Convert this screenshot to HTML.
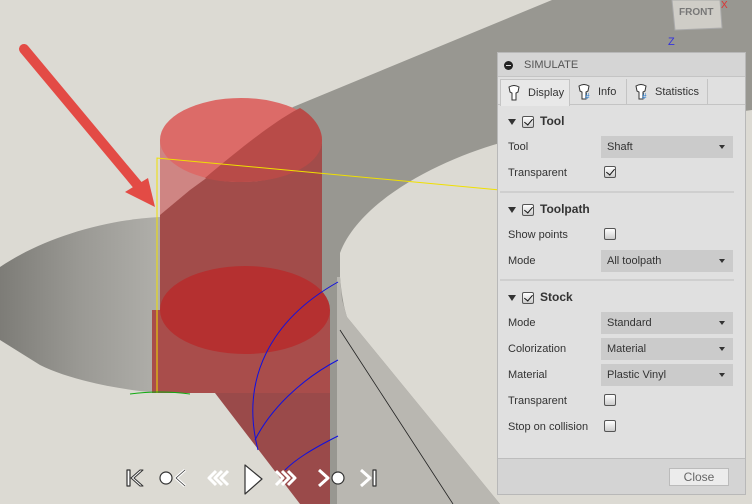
<!DOCTYPE html>
<html><head><meta charset="utf-8"><style>
*{margin:0;padding:0;box-sizing:border-box}
body{width:752px;height:504px;overflow:hidden;background:#dcdad3;font-family:"Liberation Sans",Arial,sans-serif;font-size:11px;color:#333;position:relative}
svg.scene{position:absolute;left:0;top:0}
.panel{position:absolute;left:497px;top:52px;width:249px;height:443px;background:#e0e0e0;border:1px solid #b8b8b8}
.hdr{height:24px;background:#d5d5d5;border-bottom:1px solid #c4c4c4;position:relative}
.hdr span{position:absolute;left:26px;top:6px;color:#555;font-size:11px}
.hdr i{position:absolute;left:6px;top:8px;width:9px;height:9px;border-radius:50%;background:#222}
.hdr i:after{content:"";position:absolute;left:2px;top:4px;width:5px;height:1px;background:#ddd}
.tabs{position:absolute;top:26px;left:0;right:0;height:26px;border-bottom:1px solid #c4c4c4}
.tab{position:absolute;top:0;height:26px;padding-left:27px;line-height:26px;color:#333}
.tab.act{background:#e8e8e8;border:1px solid #c4c4c4;border-bottom:none;height:27px}
.ico{position:absolute;left:7px;top:5px;width:12px;height:16px}
.row{position:absolute;left:10px;color:#333}
.sec{position:absolute;left:10px;font-weight:bold;font-size:12px;color:#333}
.tri{display:inline-block;width:0;height:0;border-left:4px solid transparent;border-right:4px solid transparent;border-top:6px solid #333;vertical-align:middle;margin-right:6px}
.cb{position:absolute;width:12px;height:12px;border:1px solid #555;border-radius:2px;background:linear-gradient(#fff,#ccc)}
.cb.on:after{content:"";position:absolute;left:3px;top:0px;width:4px;height:7px;border-right:1.5px solid #111;border-bottom:1.5px solid #111;transform:rotate(40deg)}
.dd{position:absolute;left:103px;width:132px;height:22px;background:#cbcbcb;line-height:22px;padding-left:6px;color:#333}
.dd:after{content:"";position:absolute;right:8px;top:9px;border-left:3px solid transparent;border-right:3px solid transparent;border-top:4px solid #333}
.sep{position:absolute;left:2px;width:234px;height:2px;background:#cfcfcf}
.foot{position:absolute;left:0;right:0;bottom:0;height:36px;background:#d4d4d4;border-top:1px solid #bdbdbd}
.close{position:absolute;left:171px;top:9px;width:60px;height:18px;border:1px solid #bbb;background:#ececec;text-align:center;line-height:16px;color:#666;font-size:12px}
</style></head><body>
<svg class="scene" width="752" height="504" viewBox="0 0 752 504">
<!-- gray band -->
<polygon points="160,215 293,107 552,0 752,0 752,504 330,504 330,330 160,330" fill="#989791"/>
<!-- light right face -->
<path d="M752,110 L500,143 C440,160 360,200 340,253 L340,277 C342,300 345,310 347,317 L500,504 L752,504 Z" fill="#dcdad3"/>
<!-- lighter wall below -->
<polygon points="337,277 340,277 342,300 347,317 500,504 337,504" fill="#b9b7b1"/>
<line x1="340" y1="330" x2="453" y2="504" stroke="#222" stroke-width="0.8"/>
<!-- left hole wall -->
<defs><linearGradient id="lw" x1="0" x2="1"><stop offset="0" stop-color="#7d7c77"/><stop offset="0.5" stop-color="#9a9994"/><stop offset="1" stop-color="#b0afaa"/></linearGradient></defs>
<path d="M0,267 C40,240 100,220 160,217 L160,393 C120,390 70,380 40,365 L0,340 Z" fill="url(#lw)"/>
<!-- cylinder body -->
<rect x="160" y="140" width="162" height="175" fill="#a24c4a"/>
<polygon points="160,140 300,110 190,190 160,215" fill="#cf8583"/>
<rect x="152" y="310" width="178" height="83" fill="#a94d4b"/>
<polygon points="215,393 330,393 330,504 300,504" fill="#9a4a4a"/>
<ellipse cx="245" cy="310" rx="85" ry="44" fill="#b53030"/>
<ellipse cx="241" cy="140" rx="81" ry="42" fill="#dc6b68"/>
<path d="M205,178 C250,140 280,118 300,108 C312,115 322,127 322,140 C322,165 285,182 241,182 C228,182 216,181 205,178 Z" fill="#b84b48"/>
<!-- yellow -->
<polyline points="157,393 157,158 500,190" fill="none" stroke="#f0e000" stroke-width="1"/>
<!-- blue -->
<path d="M338,282 C270,320 240,380 258,450" fill="none" stroke="#1010e0" stroke-width="1"/>
<path d="M338,360 C300,380 270,410 255,440" fill="none" stroke="#1010e0" stroke-width="1"/>
<path d="M338,436 C310,450 295,460 285,470" fill="none" stroke="#1010e0" stroke-width="1"/>
<path d="M130,394 Q160,390 190,394" fill="none" stroke="#1a1" stroke-width="1"/>
<!-- arrow -->
<line x1="24" y1="49" x2="140" y2="188" stroke="#e34b45" stroke-width="10" stroke-linecap="round"/>
<polygon points="125,192 148,178 155,207" fill="#e34b45"/>
<!-- view cube -->
<polygon points="672,0 720,0 722,28 675,30" fill="#cfcdc7" stroke="#aaa"/>
<text x="679" y="15" font-size="10" font-weight="bold" fill="#777" font-family="Liberation Sans">FRONT</text>
<text x="721" y="8" font-size="10" fill="#d33" font-family="Liberation Sans">X</text>
<text x="668" y="45" font-size="11" fill="#33d" font-family="Liberation Sans">Z</text>
<!-- controls -->
<g fill="#fff" stroke="#333" stroke-width="1.2" stroke-linejoin="round">
<rect x="127" y="470" width="3" height="16"/><path d="M143,470 L134,478 L143,486 L140,486 L131,478 L140,470Z" stroke-width="1"/>
<circle cx="166" cy="478" r="6"/><path d="M185,470 L176,478 L185,486" fill="none" stroke="#fff" stroke-width="3"/><path d="M185,470 L176,478 L185,486" fill="none" stroke="#333" stroke-width="0.8"/>
<path d="M216,471 L209,478 L216,485 M222,471 L215,478 L222,485 M228,471 L221,478 L228,485" fill="none" stroke="#fff" stroke-width="3"/>
<path d="M245,465 L262,479 L245,494 Z"/>
<path d="M276,471 L283,478 L276,485 M282,471 L289,478 L282,485 M288,471 L295,478 L288,485" fill="none" stroke="#fff" stroke-width="3"/>
<path d="M319,470 L328,478 L319,486" fill="none" stroke="#fff" stroke-width="3"/>
<circle cx="338" cy="478" r="6"/>
<path d="M361,470 L370,478 L361,486" fill="none" stroke="#fff" stroke-width="3"/><rect x="373" y="470" width="3" height="16"/>
</g>
</svg>
<div class="panel">
<div class="hdr"><i></i><span>SIMULATE</span></div>
<div class="tabs">
<div class="tab act" style="left:2px;width:70px">
<svg class="ico" viewBox="0 0 12 16"><path d="M1,2 Q6,-1 11,2 L10,7 L8,8 L8,15 L4,15 L4,8 L2,7 Z" fill="#fff" stroke="#333"/></svg>Display</div>
<div class="tab" style="left:73px;width:56px;border-right:1px solid #c4c4c4">
<svg class="ico" viewBox="0 0 12 16"><path d="M1,2 Q6,-1 11,2 L10,7 L8,8 L8,15 L4,15 L4,8 L2,7 Z" fill="#fff" stroke="#333"/><text x="7" y="15" font-size="8" fill="#27c">#</text></svg>Info</div>
<div class="tab" style="left:130px;width:80px;border-right:1px solid #c4c4c4">
<svg class="ico" viewBox="0 0 12 16"><path d="M1,2 Q6,-1 11,2 L10,7 L8,8 L8,15 L4,15 L4,8 L2,7 Z" fill="#fff" stroke="#333"/><text x="7" y="15" font-size="8" fill="#27c">#</text></svg>Statistics</div>
</div>
<div class="sec" style="top:61px"><span class="tri"></span><span class="cb on" style="position:relative;display:inline-block;vertical-align:middle;margin-right:6px"></span>Tool</div>
<div class="row" style="top:88px">Tool</div><div class="dd" style="top:83px">Shaft</div>
<div class="row" style="top:114px">Transparent</div><div class="cb on" style="left:106px;top:113px"></div>
<div class="sep" style="top:138px"></div>
<div class="sec" style="top:149px"><span class="tri"></span><span class="cb on" style="position:relative;display:inline-block;vertical-align:middle;margin-right:6px"></span>Toolpath</div>
<div class="row" style="top:176px">Show points</div><div class="cb" style="left:106px;top:175px"></div>
<div class="row" style="top:202px">Mode</div><div class="dd" style="top:197px">All toolpath</div>
<div class="sep" style="top:226px"></div>
<div class="sec" style="top:237px"><span class="tri"></span><span class="cb on" style="position:relative;display:inline-block;vertical-align:middle;margin-right:6px"></span>Stock</div>
<div class="row" style="top:264px">Mode</div><div class="dd" style="top:259px">Standard</div>
<div class="row" style="top:290px">Colorization</div><div class="dd" style="top:285px">Material</div>
<div class="row" style="top:316px">Material</div><div class="dd" style="top:311px">Plastic Vinyl</div>
<div class="row" style="top:342px">Transparent</div><div class="cb" style="left:106px;top:341px"></div>
<div class="row" style="top:368px">Stop on collision</div><div class="cb" style="left:106px;top:367px"></div>
<div class="foot"><div class="close">Close</div></div>
</div>
</body></html>
